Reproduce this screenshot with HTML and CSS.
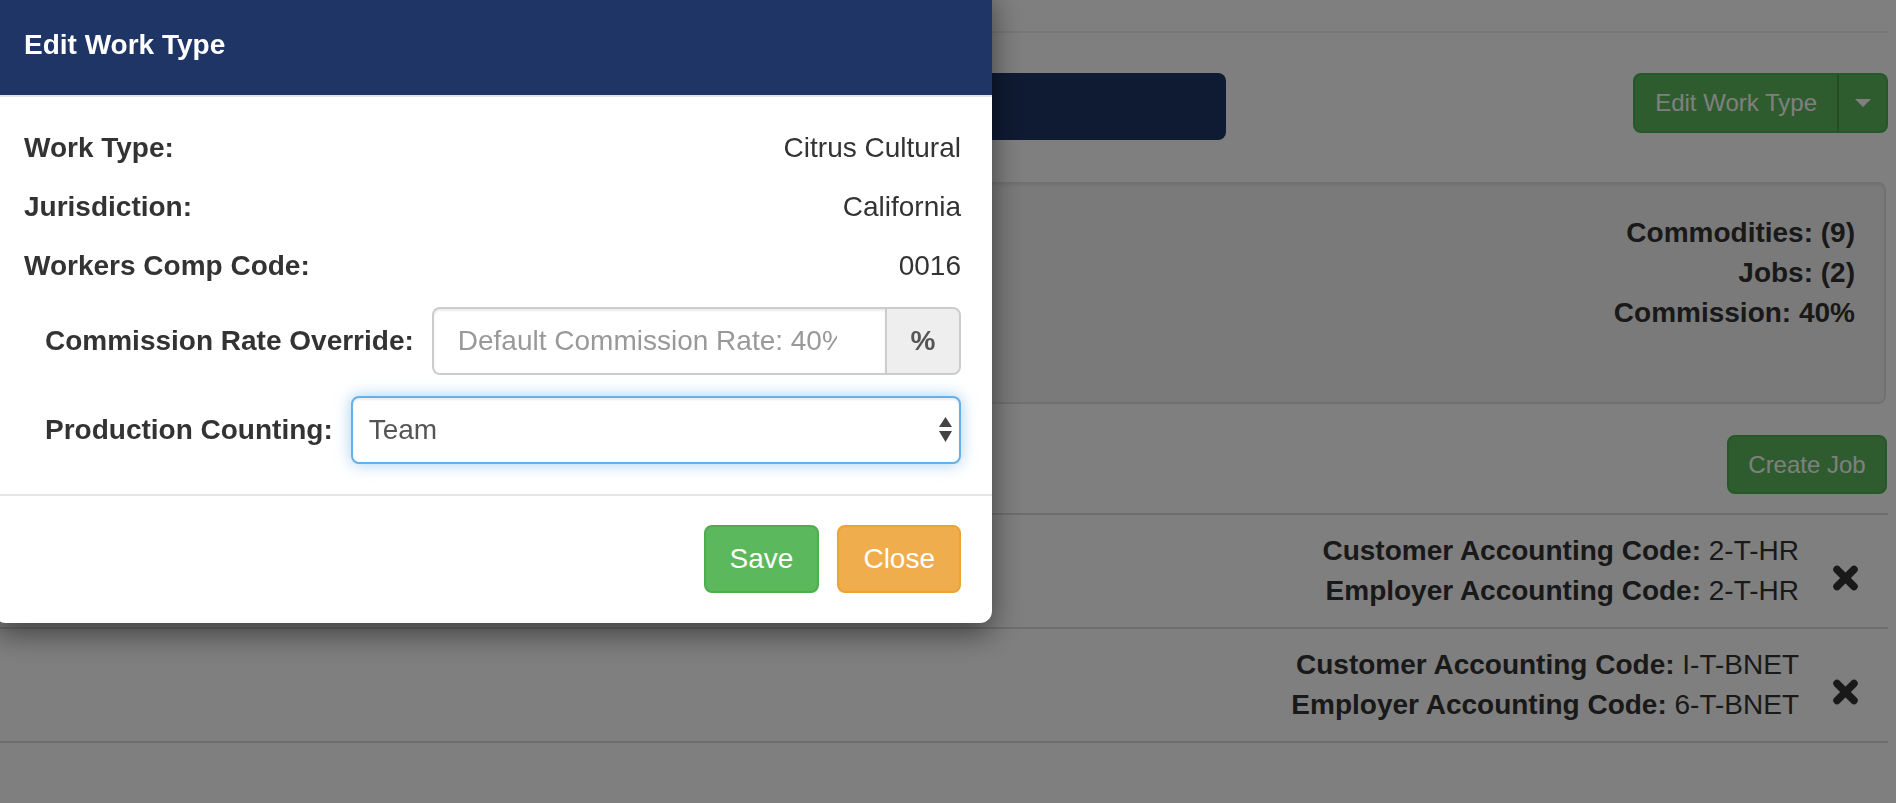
FILE: index.html
```html
<!DOCTYPE html>
<html lang="en">
<head>
<meta charset="utf-8">
<title>Edit Work Type</title>
<link rel="stylesheet" href="styles.css">
</head>
<body>
<div class="page">
  <div class="topbar"></div>
  <div class="head-row">
    <div class="banner"></div>
    <div class="btn-group">
      <span class="btn btn-success btn-sm">Edit Work Type</span>
      <span class="btn btn-success btn-sm caret-btn"><span class="caret"></span></span>
    </div>
  </div>
  <div class="well">
    <div class="stat">Commodities: (9)</div>
    <div class="stat">Jobs: (2)</div>
    <div class="stat">Commission: 40%</div>
  </div>
  <div class="jobs-head">
    <span class="btn btn-success btn-sm">Create Job</span>
  </div>
  <div class="job-list">
    <div class="job-row">
      <div class="job-codes">
        <div><b>Customer Accounting Code:</b> 2-T-HR</div>
        <div><b>Employer Accounting Code:</b> 2-T-HR</div>
      </div>
      <svg class="remove" width="27" height="28" viewBox="0 0 27 28"><path d="M5 5.5 L22 22.5 M22 5.5 L5 22.5" stroke="#333" stroke-width="7.5" stroke-linecap="round" fill="none"/></svg>
    </div>
    <div class="job-row">
      <div class="job-codes">
        <div><b>Customer Accounting Code:</b> I-T-BNET</div>
        <div><b>Employer Accounting Code:</b> 6-T-BNET</div>
      </div>
      <svg class="remove" width="27" height="28" viewBox="0 0 27 28"><path d="M5 5.5 L22 22.5 M22 5.5 L5 22.5" stroke="#333" stroke-width="7.5" stroke-linecap="round" fill="none"/></svg>
    </div>
  </div>
</div>

<div class="backdrop"></div>

<div class="modal">
  <div class="modal-header">
    <h4 class="modal-title">Edit Work Type</h4>
  </div>
  <div class="modal-body">
    <div class="info-row"><b>Work Type:</b><span>Citrus Cultural</span></div>
    <div class="info-row"><b>Jurisdiction:</b><span>California</span></div>
    <div class="info-row"><b>Workers Comp Code:</b><span>0016</span></div>
    <div class="form-row">
      <label class="form-label">Commission Rate Override:</label>
      <div class="input-group">
        <input class="form-input" type="text" placeholder="Default Commission Rate: 40%">
        <span class="addon">%</span>
      </div>
    </div>
    <div class="form-row last">
      <label class="form-label">Production Counting:</label>
      <div class="select">
        <span>Team</span>
        <svg width="13" height="26" viewBox="0 0 13 26"><path d="M6.5 0 L13 10 L0 10 Z M0 14 L13 14 L6.5 25 Z" fill="#444"/></svg>
      </div>
    </div>
  </div>
  <div class="modal-footer">
    <span class="btn btn-save">Save</span>
    <span class="btn btn-close">Close</span>
  </div>
</div>
</body>
</html>
```

FILE: styles.css
```css
* { box-sizing: border-box; }

html, body {
  margin: 0;
  padding: 0;
  background: #fff;
  overflow: hidden;
}

body {
  width: 1896px;
  height: 803px;
  font-family: "Liberation Sans", Arial, Helvetica, sans-serif;
  font-size: 28px;
  line-height: 40px;
  color: #333;
}

.page {
  padding-right: 8px;
}

.topbar {
  height: 33px;
  border-bottom: 2px solid #eee;
}

.head-row {
  display: flex;
  justify-content: space-between;
  align-items: flex-start;
  margin-top: 40px;
}

.banner {
  width: 1226px;
  height: 67px;
  background: #1f3566;
  border-radius: 8px;
}

.btn {
  display: inline-flex;
  align-items: center;
  justify-content: center;
  border: 2px solid transparent;
  border-radius: 8px;
  color: #fff;
  white-space: nowrap;
}

.btn-sm {
  height: 60px;
  padding: 0 20px;
  font-size: 24px;
}

.btn-success {
  background: #5cb85c;
  border-color: #4cae4c;
}

.btn-group {
  display: flex;
}

.btn-group .btn:first-child {
  border-top-right-radius: 0;
  border-bottom-right-radius: 0;
}

.btn-group .caret-btn {
  width: 51px;
  padding: 0;
  margin-left: -2px;
  border-left-color: #449d44;
  border-top-left-radius: 0;
  border-bottom-left-radius: 0;
}

.caret {
  width: 0;
  height: 0;
  border-top: 8px solid #fff;
  border-left: 8px solid transparent;
  border-right: 8px solid transparent;
}

.well {
  margin-top: 42px;
  margin-right: 2px;
  height: 222px;
  padding: 29px 29px;
  background: #f5f5f5;
  border: 2px solid #e3e3e3;
  border-radius: 8px;
  box-shadow: inset 0 2px 2px rgba(0, 0, 0, 0.05);
  text-align: right;
}

.stat {
  font-weight: bold;
}

.jobs-head {
  display: flex;
  justify-content: flex-end;
  margin-top: 31px;
  margin-right: 1px;
}

.jobs-head .btn {
  width: 160px;
  height: 59px;
}

.job-list {
  margin-top: 19px;
  border-top: 2px solid #ddd;
}

.job-row {
  display: flex;
  justify-content: flex-end;
  align-items: flex-start;
  gap: 33px;
  padding: 16px 29px 16px 0;
  border-bottom: 2px solid #ddd;
}

.job-codes {
  text-align: right;
}

.remove {
  margin-top: 33px;
  flex: none;
}

.backdrop {
  position: fixed;
  inset: 0;
  background: rgba(0, 0, 0, 0.5);
}

.modal {
  position: fixed;
  top: -12px;
  left: -6px;
  width: 998px;
  background: #fff;
  border-radius: 12px;
  box-shadow: 0 10px 30px rgba(0, 0, 0, 0.5);
  overflow: hidden;
}

.modal-header {
  height: 109px;
  padding: 37px 31px 0 30px;
  background: #1f3566;
  border-bottom: 2px solid #e5e5e5;
}

.modal-title {
  margin: 0;
  font-size: 28px;
  line-height: 40px;
  font-weight: bold;
  color: #fff;
}

.modal-body {
  padding: 31px 31px 30px 30px;
}

.info-row {
  display: flex;
  justify-content: space-between;
  margin-bottom: 19px;
}

.info-row:nth-child(3) {
  margin-bottom: 21px;
}

.form-row {
  display: flex;
  align-items: center;
  gap: 18px;
  padding-left: 21px;
  margin-bottom: 21px;
}

.form-row.last {
  margin-bottom: 0;
}

.form-label {
  font-weight: bold;
  white-space: nowrap;
}

.input-group {
  flex: 1;
  display: flex;
  height: 68px;
  min-width: 0;
}

.form-input {
  flex: 1;
  min-width: 0;
  height: 68px;
  margin: 0;
  padding: 0 48px 0 24px;
  border: 2px solid #ccc;
  border-right: 0;
  border-radius: 8px 0 0 8px;
  font-family: inherit;
  font-size: 28px;
  color: #555;
  background: #fff;
  box-shadow: inset 0 2px 2px rgba(0, 0, 0, 0.075);
  outline: none;
}

.form-input::placeholder {
  color: #999;
}

.addon {
  flex: none;
  width: 76px;
  height: 68px;
  display: flex;
  align-items: center;
  justify-content: center;
  background: #eee;
  border: 2px solid #ccc;
  border-radius: 0 8px 8px 0;
  font-weight: bold;
  color: #555;
}

.select {
  flex: 1;
  height: 68px;
  display: flex;
  align-items: center;
  justify-content: space-between;
  padding: 0 7px 0 16px;
  border: 2px solid #66afe9;
  border-radius: 8px;
  color: #555;
  background: #fff;
  box-shadow: inset 0 2px 2px rgba(0, 0, 0, 0.075), 0 0 16px rgba(102, 175, 233, 0.6);
}

.modal-footer {
  display: flex;
  justify-content: flex-end;
  gap: 18px;
  padding: 29px 31px 30px 30px;
  border-top: 2px solid #e5e5e5;
}

.btn-save,
.btn-close {
  height: 68px;
  padding: 0 24px;
  font-size: 28px;
}

.btn-save {
  background: #5cb85c;
  border-color: #4cae4c;
}

.btn-close {
  background: #f0ad4e;
  border-color: #eea236;
}
```
